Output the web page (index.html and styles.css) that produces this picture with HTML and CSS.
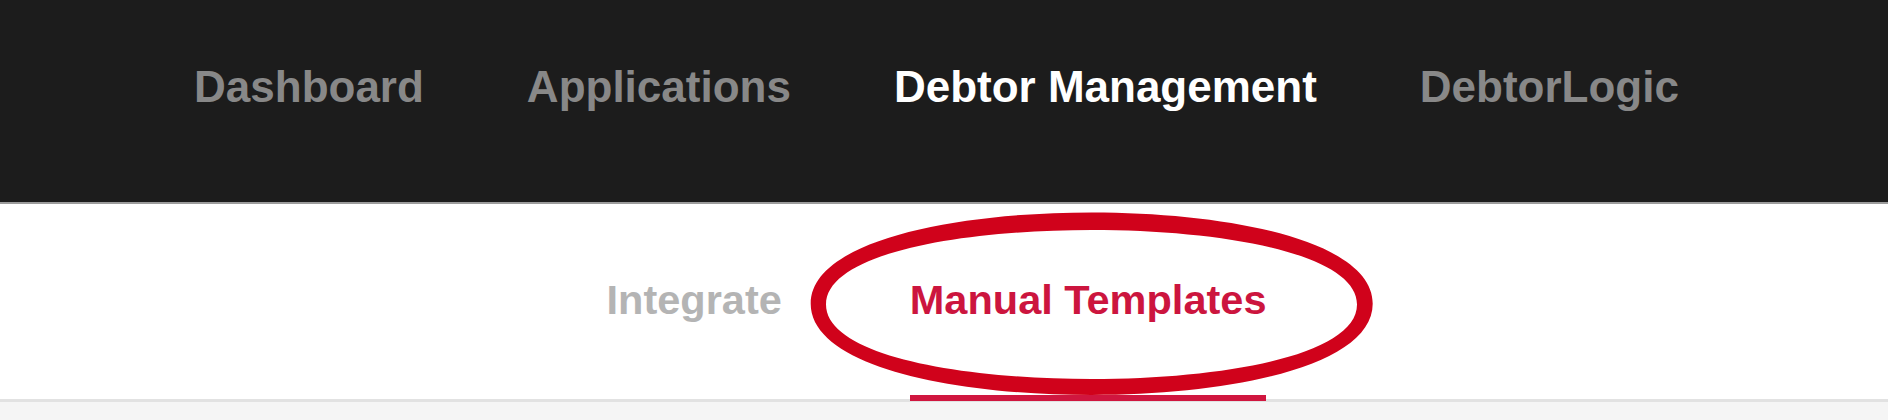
FILE: index.html
```html
<!DOCTYPE html>
<html>

<head>
    <title>Debtor Management - Manual Templates</title>
    <link rel="stylesheet" href="styles.css">
</head>

<body>
    <div class="page">
        <div class="main-nav">
            <a class="main-link" href="#">Dashboard</a>
            <a class="main-link" href="#">Applications</a>
            <a class="main-link active" href="#">Debtor Management</a>
            <a class="main-link" href="#">DebtorLogic</a>
        </div>
        <div class="sub-nav">
            <a class="sub-link" href="#">Integrate</a>
            <a class="sub-link active" href="#">Manual Templates</a>
        </div>
        <!-- hand drawn ring around the active tab, a bit thicker at top and bottom -->
        <svg class="annotation" width="1888" height="420" viewBox="0 0 1888 420">
            <path fill="#d0021b" fill-rule="evenodd"
                d="M 810.7 303.7 C 810.7 241.6 951.2 212.4 1091.7 212.4 C 1232.2 212.4 1372.7 241.6 1372.7 303.7
                   C 1372.7 365.8 1232.2 395 1091.7 395 C 951.2 395 810.7 365.8 810.7 303.7 Z
                   M 826 304.5 C 826 253.8 958.75 230 1091.5 230 C 1224.25 230 1357 253.8 1357 304.5
                   C 1357 355.2 1224.25 379 1091.5 379 C 958.75 379 826 355.2 826 304.5 Z" />
        </svg>
    </div>
</body>

</html>
```

FILE: styles.css
```css
body {
    margin: 0;
    background-color: #f5f5f5;
    font-family: 'Liberation Sans', Arial, sans-serif;
    font-weight: bold;
}

.page {
    position: relative;
    min-height: 420px;
}

a {
    text-decoration: none;
}

.main-nav {
    display: flex;
    justify-content: center;
    gap: 103px;
    height: 204px;
    box-sizing: border-box;
    padding: 65px 15px 0 0;
    background-color: #1c1c1c;
    border-bottom: 2px solid #9c9c9c;
}

.main-link {
    font-size: 44px;
    line-height: 44px;
    color: #888888;
}

.main-link.active {
    color: #ffffff;
}

.sub-nav {
    display: flex;
    justify-content: center;
    align-items: flex-end;
    gap: 128px;
    height: 198px;
    box-sizing: border-box;
    padding-right: 15px;
    background-color: #ffffff;
    border-bottom: 3px solid #e2e2e2;
}

.sub-link {
    font-size: 41.5px;
    line-height: 41px;
    color: #b4b4b4;
    padding-bottom: 75px;
    margin-bottom: -2px;
    border-bottom: 6px solid transparent;
}

.sub-link.active {
    color: #cc153e;
    border-bottom-color: #d0163f;
}

.annotation {
    position: absolute;
    top: 0;
    left: 0;
    pointer-events: none;
}
```
